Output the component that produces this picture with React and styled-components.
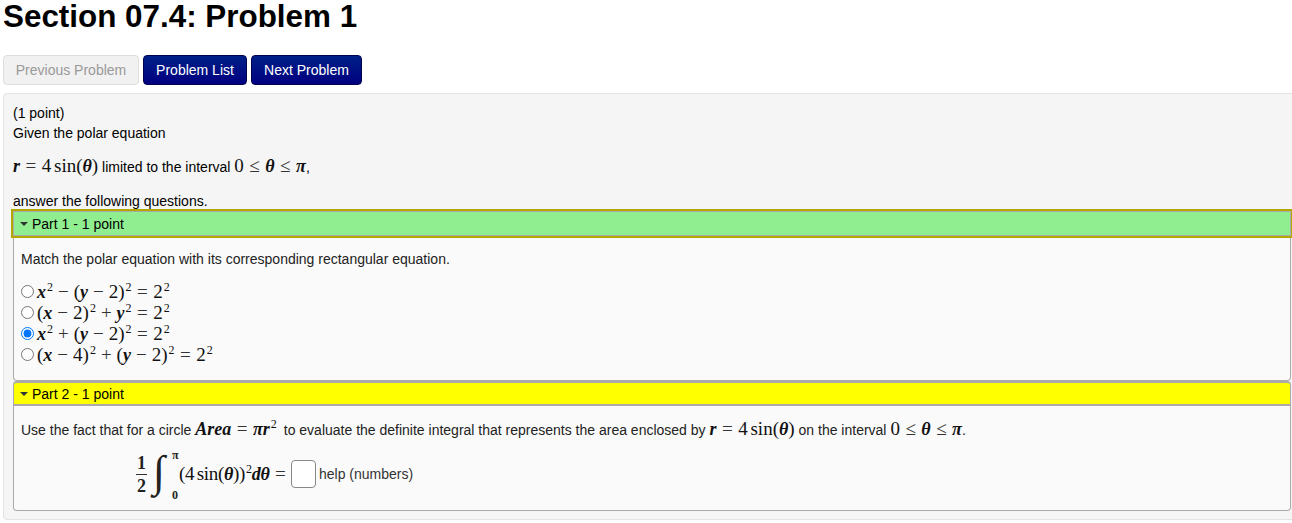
import React from 'react'
import styled, { createGlobalStyle } from 'styled-components'

const GlobalStyle = createGlobalStyle`
    html, body {
        margin: 0;
        padding: 0;
        overflow: hidden;
        background: #fff;
    }
    body {
        font-family: "Liberation Sans", Arial, sans-serif;
        font-size: 14px;
        line-height: 20px;
        color: #000;
    }
`

const Page = styled.div`
    width: 1301px;
    height: 523px;
    padding-left: 3px;
    box-sizing: border-box;
`

const Title = styled.h1`
    margin: 0;
    height: 55px;
    font-size: 31.4px;
    line-height: 33px;
    font-weight: 700;
`

const Toolbar = styled.nav`
    display: flex;
    gap: 4px;
    height: 30px;
    margin-bottom: 8px;
`

const NavButton = styled.a`
    display: flex;
    align-items: center;
    justify-content: center;
    box-sizing: border-box;
    width: ${({ $width }) => $width}px;
    border-radius: 4px;
    border: 1px solid ${({ $disabled }) => ($disabled ? '#ddd' : '#00004d')};
    background: ${({ $disabled }) => ($disabled ? '#f1f1f1' : 'linear-gradient(#002088, #000080)')};
    color: ${({ $disabled }) => ($disabled ? '#999' : '#fff')};
    font-size: 14px;
`

const Well = styled.section`
    box-sizing: border-box;
    height: 427px;
    padding: 9px;
    background: #f5f5f5;
    border: 1px solid #e3e3e3;
    border-radius: 4px;
`

const Line = styled.div`
    min-height: 20px;
`

const MathLine = styled.div`
    height: 28px;
    margin-top: 9px;
    margin-bottom: 11px;
    line-height: 28px;
`

const PartHeader = styled.div`
    display: flex;
    align-items: center;
    gap: 4px;
    box-sizing: border-box;
    height: 25px;
    padding-left: 6px;
    background: ${({ $bg }) => $bg};
    border: solid #aaa;
    border-width: ${({ $focused }) => ($focused ? '1px' : '2px 1px 2px 1px')};
    border-radius: ${({ $focused }) => ($focused ? '0' : '4px 4px 0 0')};
    outline: ${({ $focused }) => ($focused ? '2px solid #b3a800' : 'none')};
    position: relative;
`

const Caret = styled.span`
    width: 0;
    height: 0;
    border-left: 4px solid transparent;
    border-right: 4px solid transparent;
    border-top: 4px solid #333;
`

const PartBody = styled.div`
    box-sizing: border-box;
    height: ${({ $height }) => $height}px;
    padding: ${({ $pad }) => $pad}px 7px 0;
    background: #fafafa;
    border: 1px solid #aaa;
    border-top: none;
    border-radius: 0 0 4px 4px;
    color: #222;
`

const Options = styled.div`
    display: flex;
    flex-direction: column;
    margin-top: 12px;
`

const OptionRow = styled.label`
    display: flex;
    align-items: center;
    gap: 3px;
    height: 21px;
    color: #000;
`

const Radio = styled.input`
    width: 13px;
    height: 13px;
    margin: 0;
`

const M = styled.span`
    font-family: "Liberation Serif", "DejaVu Serif", serif;
    font-size: 19px;
    color: #111;
    white-space: nowrap;
    word-spacing: -2px;
`

const V = styled.i`
    font-weight: 700;
    font-size: 18px;
`

const Sup = styled.sup`
    font-size: 12px;
    line-height: 0;
    vertical-align: 7px;
    margin-left: 1px;
`

const Rel = styled.span`
    margin: 0 5.5px;
    color: #333;
`

const Bin = styled.span`
    margin: 0 5px;
    color: #333;
`

const Sentence = styled.div`
    white-space: nowrap;
    height: 26px;
    line-height: 26px;
`

const AreaMath = styled(M)`
    margin-right: 3px;
`

const Formula = styled.div`
    display: flex;
    align-items: center;
    height: 60px;
    margin-top: 2px;
    padding-left: 115px;
    color: #222;
`

const Fraction = styled.span`
    display: inline-flex;
    flex-direction: column;
    align-items: center;
    width: 11px;
    margin-right: 6px;
    font-family: "Liberation Serif", serif;
    font-size: 18px;
    font-weight: 700;
    line-height: 22px;
    & > b {
        width: 100%;
        height: 1px;
        background: #333;
    }
`

const Integral = styled.span`
    position: relative;
    display: inline-block;
    width: 26px;
    height: 44px;
    font-family: "Liberation Serif", serif;
    font-size: 44px;
    line-height: 40px;
    & > small {
        position: absolute;
        left: 19px;
        font-family: "Liberation Serif", serif;
        font-size: 12px;
        line-height: 12px;
        font-weight: 700;
    }
`

const Upper = styled.small`
    top: -3px;
`

const Lower = styled.small`
    bottom: -5px;
`

const FormulaMath = styled(M)`
    margin-right: -2px;
    letter-spacing: -0.3px;
`

const AnswerBox = styled.input`
    box-sizing: border-box;
    width: 25px;
    height: 28px;
    margin: 0 3px 0 2px;
    border: 1px solid #888;
    border-radius: 4px;
    background: #fff;
`

const Help = styled.span`
    color: #333;
`

const options = [
    { id: 1, eq: <><V>x</V><Sup>2</Sup><Bin>−</Bin>(<V>y</V><Bin>−</Bin>2)<Sup>2</Sup><Rel>=</Rel>2<Sup>2</Sup></> },
    { id: 2, eq: <>(<V>x</V><Bin>−</Bin>2)<Sup>2</Sup><Bin>+</Bin><V>y</V><Sup>2</Sup><Rel>=</Rel>2<Sup>2</Sup></> },
    { id: 3, checked: true, eq: <><V>x</V><Sup>2</Sup><Bin>+</Bin>(<V>y</V><Bin>−</Bin>2)<Sup>2</Sup><Rel>=</Rel>2<Sup>2</Sup></> },
    { id: 4, eq: <>(<V>x</V><Bin>−</Bin>4)<Sup>2</Sup><Bin>+</Bin>(<V>y</V><Bin>−</Bin>2)<Sup>2</Sup><Rel>=</Rel>2<Sup>2</Sup></> },
]

const PolarEq = () => (
    <M><V>r</V><Rel>=</Rel>4 sin(<V>θ</V>)</M>
)

const Interval = () => (
    <M>0<Rel>≤</Rel><V>θ</V><Rel>≤</Rel><V>π</V></M>
)

const App = () => {
    return (
        <Page>
            <GlobalStyle />
            <Title>Section 07.4: Problem 1</Title>
            <Toolbar>
                <NavButton $disabled $width={136}>Previous Problem</NavButton>
                <NavButton $width={104}>Problem List</NavButton>
                <NavButton $width={111}>Next Problem</NavButton>
            </Toolbar>
            <Well>
                <Line>(1 point)</Line>
                <Line>Given the polar equation</Line>
                <MathLine><PolarEq /> limited to the interval <Interval />,</MathLine>
                <Line>answer the following questions.</Line>

                <PartHeader $focused $bg="#90ee90"><Caret />Part 1 - 1 point</PartHeader>
                <PartBody $height={145} $pad={13}>
                    <div>Match the polar equation with its corresponding rectangular equation.</div>
                    <Options>
                        {options.map((o) => (
                            <OptionRow key={o.id}>
                                <Radio type="radio" name="part1" defaultChecked={o.checked} />
                                <M>{o.eq}</M>
                            </OptionRow>
                        ))}
                    </Options>
                </PartBody>

                <PartHeader $bg="#ff0"><Caret />Part 2 - 1 point</PartHeader>
                <PartBody $height={105} $pad={10}>
                    <Sentence>
                        Use the fact that for a circle <AreaMath><V>Area</V><Rel>=</Rel><V>πr</V><Sup>2</Sup></AreaMath> to evaluate the definite integral that represents the area enclosed by <PolarEq /> on the interval <Interval />.
                    </Sentence>
                    <Formula>
                        <Fraction>1<b />2</Fraction>
                        <Integral>
                            ∫
                            <Upper>π</Upper>
                            <Lower>0</Lower>
                        </Integral>
                        <FormulaMath>(4 sin(<V>θ</V>))<Sup>2</Sup><V>dθ</V><Rel>=</Rel></FormulaMath>
                        <AnswerBox type="text" aria-label="answer" />
                        <Help>help (numbers)</Help>
                    </Formula>
                </PartBody>
            </Well>
        </Page>
    )
}

export default App
